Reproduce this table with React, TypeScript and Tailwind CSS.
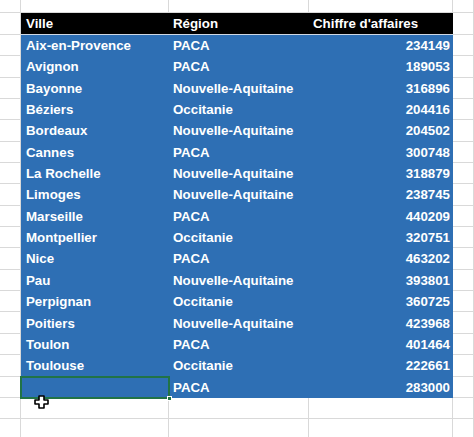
import React from 'react'

// Excel-like sheet: a formatted table with a selected empty cell
const ROWS: [string, string, string][] = [
  ['Aix-en-Provence', 'PACA', '234149'],
  ['Avignon', 'PACA', '189053'],
  ['Bayonne', 'Nouvelle-Aquitaine', '316896'],
  ['Béziers', 'Occitanie', '204416'],
  ['Bordeaux', 'Nouvelle-Aquitaine', '204502'],
  ['Cannes', 'PACA', '300748'],
  ['La Rochelle', 'Nouvelle-Aquitaine', '318879'],
  ['Limoges', 'Nouvelle-Aquitaine', '238745'],
  ['Marseille', 'PACA', '440209'],
  ['Montpellier', 'Occitanie', '320751'],
  ['Nice', 'PACA', '463202'],
  ['Pau', 'Nouvelle-Aquitaine', '393801'],
  ['Perpignan', 'Occitanie', '360725'],
  ['Poitiers', 'Nouvelle-Aquitaine', '423968'],
  ['Toulon', 'PACA', '401464'],
  ['Toulouse', 'Occitanie', '222661'],
  ['', 'PACA', '283000'],
]

const font = "font-['Liberation_Sans',Arial,sans-serif]"
const blank = 'border-r border-b border-[#d9d9d9] bg-white'

function BlankRow({ h }: { h: string }) {
  return (
    <div className={`flex ${h}`}>
      <div className={`w-[21px] ${blank}`} />
      <div className={`w-[148px] ${blank}`} />
      <div className={`w-[140px] ${blank}`} />
      <div className={`w-[144px] ${blank}`} />
      <div className={`flex-1 ${blank}`} />
    </div>
  )
}

export default function App() {
  return (
    <div className={`relative w-[474px] h-[437px] overflow-hidden bg-white ${font}`}>
      <BlankRow h="h-[13px]" />

      {/* Header */}
      <div className="flex h-[22px]">
        <div className={`w-[21px] ${blank}`} />
        <div className="w-[432px] flex bg-black text-white font-bold text-[13.3px] border-b border-[#cfd8e4]">
          <div className="w-[148px] pl-[5px] flex items-center pt-[1px]">Ville</div>
          <div className="w-[140px] pl-[4px] flex items-center pt-[1px]">Région</div>
          <div className="w-[144px] pl-[4px] flex items-center pt-[1px]">Chiffre d'affaires</div>
        </div>
        <div className={`flex-1 ${blank}`} />
      </div>

      {/* Table rows */}
      {ROWS.map(([ville, region, ca], i) => (
        <div key={i} className="flex h-[21.35px]">
          <div className={`w-[21px] ${blank}`} />
          <div className="w-[432px] flex bg-[#2e6fb4] text-white font-bold text-[13.3px] leading-none">
            <div className="w-[148px] pl-[5px] flex items-end pb-[4px]">{ville}</div>
            <div className="w-[140px] pl-[4px] flex items-end pb-[4px]">{region}</div>
            <div className="w-[144px] pr-[3px] flex items-end justify-end pb-[4px]">{ca}</div>
          </div>
          <div className={`flex-1 ${blank}`} />
        </div>
      ))}

      <BlankRow h="h-[21px]" />
      <BlankRow h="h-[21px]" />

      {/* Selected cell */}
      <div className="absolute left-[20px] top-[376px] w-[150px] h-[23px] border-2 border-[#217346]">
        <div className="absolute -right-[4px] -bottom-[4px] w-[5px] h-[5px] bg-[#217346] border border-white" />
      </div>

      {/* Cursor */}
      <svg className="absolute left-[34px] top-[395px]" width="15" height="14" viewBox="0 0 15 14">
        <path
          d="M5 1h5v4h4v4h-4v4h-5v-4h-4v-4h4z"
          fill="white"
          stroke="black"
          strokeWidth="1.6"
          strokeLinejoin="round"
        />
      </svg>
    </div>
  )
}
